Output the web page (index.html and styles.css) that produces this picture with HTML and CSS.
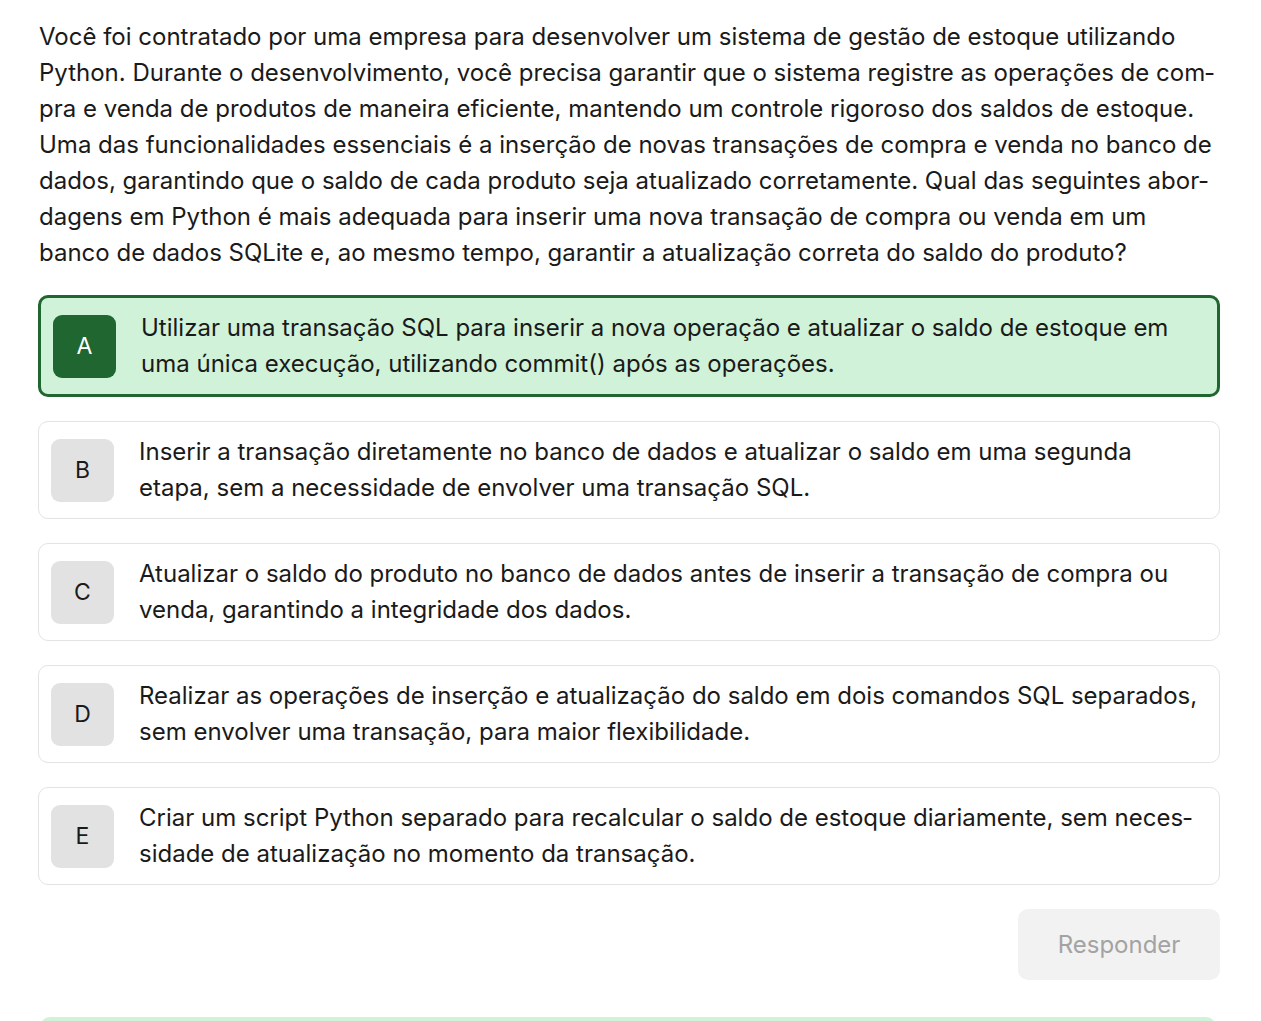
FILE: index.html
```html
<!DOCTYPE html>
<html lang="pt-BR">
<head>
<meta charset="utf-8">
<title>Questão</title>
<link rel="stylesheet" href="styles.css">
</head>
<body>
<main class="page">
  <p class="question">Você foi contratado por uma empresa para desenvolver um sistema de gestão de estoque utilizando Python. Durante o desenvolvimento, você precisa garantir que o sistema registre as operações de com&shy;pra e venda de produtos de maneira eficiente, mantendo um controle rigoroso dos saldos de estoque. Uma das funcionalidades essenciais é a inserção de novas transações de compra e venda no banco de dados, garantindo que o saldo de cada produto seja atualizado corretamente. Qual das seguintes abor&shy;dagens em Python é mais adequada para inserir uma nova transação de compra ou venda em um banco de dados SQLite e, ao mesmo tempo, garantir a atualização correta do saldo do produto?</p>
  <ul class="options">
    <li class="option selected"><span class="letter">A</span><span class="text">Utilizar uma transação SQL para inserir a nova operação e atualizar o saldo de estoque em uma única execução, utilizando commit() após as operações.</span></li>
    <li class="option"><span class="letter">B</span><span class="text">Inserir a transação diretamente no banco de dados e atualizar o saldo em uma segunda etapa, sem a necessidade de envolver uma transação SQL.</span></li>
    <li class="option"><span class="letter">C</span><span class="text">Atualizar o saldo do produto no banco de dados antes de inserir a transação de compra ou venda, garantindo a integridade dos dados.</span></li>
    <li class="option"><span class="letter">D</span><span class="text">Realizar as operações de inserção e atualização do saldo em dois comandos SQL separados, sem envolver uma transação, para maior flexibilidade.</span></li>
    <li class="option"><span class="letter">E</span><span class="text">Criar um script Python separado para recalcular o saldo de estoque diariamente, sem neces&shy;sidade de atualização no momento da transação.</span></li>
  </ul>
  <div class="actions">
    <button class="submit" disabled>Responder</button>
  </div>
  <div class="feedback"></div>
</main>
</body>
</html>
```

FILE: styles.css
```css
* { box-sizing: border-box; }
html, body { margin: 0; padding: 0; background: #fff; }
body {
  font-family: "Inter", "Noto Sans", sans-serif;
  color: #1a1a1a;
  font-size: 24px;
  line-height: 36px;
}
.page {
  width: 1182px;
  margin-left: 38px;
  padding-top: 19px;
}
.question {
  margin: 0 0 24px;
  padding-left: 1px;
  hyphens: manual;
  -webkit-hyphens: manual;
}
.options {
  list-style: none;
  margin: 0;
  padding: 0;
  display: flex;
  flex-direction: column;
  gap: 24px;
}
.option {
  display: flex;
  align-items: center;
  gap: 25px;
  padding: 12px;
  border: 1px solid #e3e3e3;
  border-radius: 10px;
  background: #fff;
}
.option.selected {
  border: 3px solid #1f6630;
  background: #d0f2d8;
  padding: 12px;
}
.letter {
  flex: 0 0 63px;
  height: 63px;
  border-radius: 9px;
  background: #e2e2e2;
  display: flex;
  align-items: center;
  justify-content: center;
  font-size: 23px;
}
.selected .letter {
  background: #1f6630;
  color: #fff;
}
.text {
  hyphens: manual;
  -webkit-hyphens: manual;
}
.actions {
  display: flex;
  justify-content: flex-end;
  margin-top: 24px;
}
.submit {
  width: 202px;
  height: 71px;
  border: none;
  border-radius: 10px;
  background: #f2f2f2;
  color: #a3a3a3;
  font-family: inherit;
  font-size: 24px;
}
.feedback {
  margin: 37px 4px 0 2px;
  height: 60px;
  background: #d0f2d8;
  border-radius: 10px 10px 0 0;
}
```
